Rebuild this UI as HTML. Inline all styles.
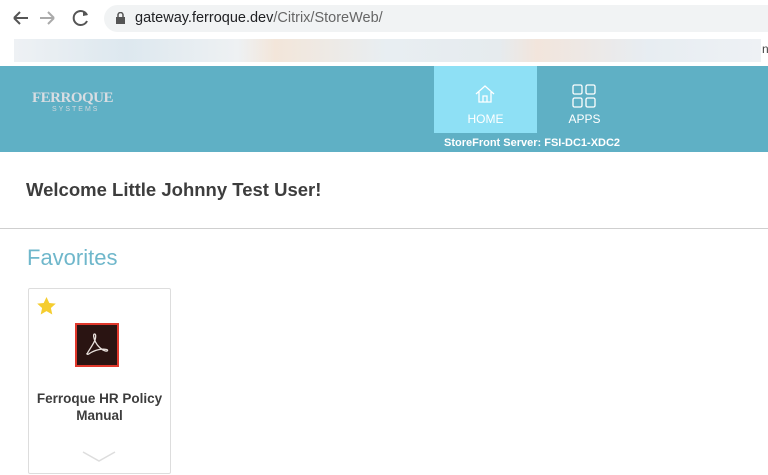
<!DOCTYPE html>
<html><head><style>
body{margin:0;width:768px;height:475px;overflow:hidden;background:#fff;font-family:"Liberation Sans",sans-serif;position:relative}
.a{position:absolute}
</style></head><body>
<div class="a" style="left:0;top:0;width:768px;height:36px;background:#fff"></div>
<svg class="a" style="left:10px;top:8px" width="80" height="20"><path d="M4 10h14M4 10l6-6M4 10l6 6" stroke="#555" stroke-width="2" fill="none"/><path d="M44 10h-14M44 10l-6-6M44 10l-6 6" stroke="#aaa" stroke-width="2" fill="none"/><path d="M77 7a7 7 0 1 0 0 6" stroke="#555" stroke-width="2" fill="none"/><path d="M73 3l5 4-5 1z" fill="#555"/></svg>
<div class="a" style="left:104px;top:5px;width:664px;height:27px;background:#f1f3f4;border-radius:14px 0 0 14px"></div>
<svg class="a" style="left:116px;top:12px" width="9" height="12"><rect x="0" y="5" width="9" height="7" fill="#555"/><path d="M2 5V3a2.5 2.5 0 0 1 5 0v2" stroke="#555" stroke-width="1.5" fill="none"/></svg>
<div class="a" style="left:135px;top:10px;font-size:14.5px;color:#202124">gateway.ferroque.dev<span style="color:#666">/Citrix/StoreWeb/</span></div>
<div class="a" style="left:14px;top:39px;width:747px;height:23px;background:linear-gradient(90deg,#eef1f4,#dde8ef 15%,#eef1f3 30%,#f3e6da 35%,#e8eef2 50%,#e6ebee 65%,#f2e5dc 70%,#e7edf2 85%,#eef1f4)"></div>
<div class="a" style="left:762px;top:42px;font-size:12px;color:#444">n</div>
<div class="a" style="left:0;top:66px;width:768px;height:86px;background:#5fb0c5"></div>
<div class="a" style="left:32px;top:90px;font-size:15px;font-weight:bold;color:#d8dde2;font-family:'Liberation Serif',serif;letter-spacing:-0.5px">FERROQUE</div>
<div class="a" style="left:52px;top:106px;font-size:7px;color:#d0d8dd;letter-spacing:2px">SYSTEMS</div>
<div class="a" style="left:434px;top:66px;width:103px;height:67px;background:#8ee0f5"></div>
<svg class="a" style="left:474px;top:84px" width="22" height="20"><path d="M2 10L11 2l9 8M5 8v10h12V8M9 18v-6h4v6" stroke="#fff" stroke-width="1.3" fill="none"/></svg>
<div class="a" style="left:434px;top:112px;width:103px;text-align:center;font-size:12px;color:#fff">HOME</div>
<svg class="a" style="left:572px;top:84px" width="24" height="24"><g stroke="#fff" stroke-width="1.3" fill="none"><rect x="1" y="1" width="9" height="9" rx="1.5"/><rect x="14" y="1" width="9" height="9" rx="1.5"/><rect x="1" y="14" width="9" height="9" rx="1.5"/><rect x="14" y="14" width="9" height="9" rx="1.5"/></g></svg>
<div class="a" style="left:537px;top:112px;width:95px;text-align:center;font-size:12px;color:#fff">APPS</div>
<div class="a" style="left:444px;top:137px;font-size:11px;font-weight:bold;color:#fff">StoreFront Server: FSI-DC1-XDC2</div>
<div class="a" style="left:26px;top:179px;font-size:18.5px;font-weight:bold;color:#3d3d3d">Welcome Little Johnny Test User!</div>
<div class="a" style="left:0;top:228px;width:768px;height:1px;background:#cfcfcf"></div>
<div class="a" style="left:27px;top:245px;font-size:22px;color:#6fb7cb">Favorites</div>
<div class="a" style="left:28px;top:288px;width:141px;height:184px;border:1px solid #ddd;border-radius:2px"></div>
<svg class="a" style="left:37px;top:297px" width="19" height="18"><path d="M9.5 0l2.8 6 6.5.6-4.9 4.4 1.4 6.5-5.8-3.4-5.8 3.4 1.4-6.5L.2 6.6 6.7 6z" fill="#f5cd2f"/></svg>
<div class="a" style="left:75px;top:323px;width:44px;height:44px;background:#2a1412;border:2px solid #e0382c;box-sizing:border-box"></div>
<svg class="a" style="left:83px;top:331px" width="28" height="28"><path d="M4 23c2-4 6-9 8-14 1-3 1-6-0.5-6s-1 4 1 8c2 4 6 8 10 9 2 .5 3-1 1-1.5-4-1-11 0-17 4-2 1.5-3 .5-2.5 0" stroke="#e8e0dc" stroke-width="1.3" fill="none"/></svg>
<div class="a" style="left:28px;top:390px;width:143px;text-align:center;font-size:13.5px;font-weight:bold;color:#3d3d3d;line-height:17px">Ferroque HR Policy<br>Manual</div>
<svg class="a" style="left:82px;top:451px" width="34" height="12"><path d="M1 1l16 9 16-9" stroke="#ddd" stroke-width="1.5" fill="none"/></svg>
</body></html>
